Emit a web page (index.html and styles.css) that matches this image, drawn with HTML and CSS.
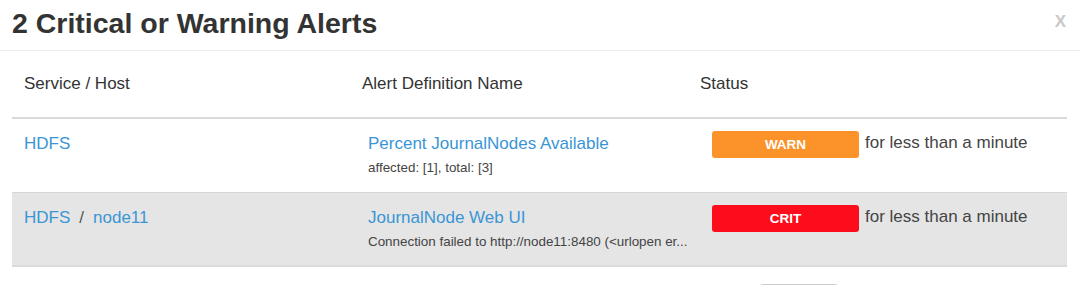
FILE: index.html
```html
<!DOCTYPE html>
<html lang="en">
<head>
  <meta charset="UTF-8">
  <title>Critical or Warning Alerts</title>
  <link rel="stylesheet" href="styles.css">
</head>
<body>

<div class="modal">
  <div class="modal-header">
    <h3>2 Critical or Warning Alerts</h3>
    <span class="close">X</span>
  </div>

  <div class="alerts">
    <div class="alert-row head">
      <div class="cell">Service / Host</div>
      <div class="cell">Alert Definition Name</div>
      <div class="cell">Status</div>
    </div>

    <div class="alert-row">
      <div class="cell host"><a href="#">HDFS</a></div>
      <div class="cell name">
        <a href="#">Percent JournalNodes Available</a>
        <div class="detail">affected: [1], total: [3]</div>
      </div>
      <div class="cell status">
        <span class="badge warn">WARN</span>
        <span class="since">for less than a minute</span>
      </div>
    </div>

    <div class="alert-row shaded">
      <div class="cell host"><a href="#">HDFS</a><span class="sep">/</span><a href="#">node11</a></div>
      <div class="cell name">
        <a href="#">JournalNode Web UI</a>
        <div class="detail">Connection failed to http://node11:8480 (&lt;urlopen er...</div>
      </div>
      <div class="cell status">
        <span class="badge crit">CRIT</span>
        <span class="since">for less than a minute</span>
      </div>
    </div>
  </div>

  <!-- footer button is cut off by the window -->
  <div class="modal-footer">
    <button class="btn" aria-label="OK"></button>
  </div>
</div>

</body>
</html>
```

FILE: styles.css
```css
body {
  margin: 0;
  font-family: 'Liberation Sans', Arial, sans-serif;
  font-size: 17px;
  color: #333;
  background: #fff;
  overflow: hidden;
}

a {
  color: #3a95d5;
  text-decoration: none;
}

.modal-header {
  display: flex;
  align-items: flex-start;
  justify-content: space-between;
  height: 50px;
  padding: 0 14px 0 12px;
  border-bottom: 1px solid #ececec;
}

.modal-header h3 {
  margin: 0;
  padding-top: 7px;
  font-size: 28.5px;
  font-weight: bold;
  color: #333;
}

.close {
  margin-top: 12px;
  font-size: 17px;
  font-weight: bold;
  color: #c8c8c8;
}

.alerts {
  margin: 0 13px 0 12px;
}

.alert-row {
  display: grid;
  grid-template-columns: 338px 338px 1fr;
  height: 73px;
  border-bottom: 1px solid #d6d6d6;
}

.alert-row.head {
  height: 66px;
  border-bottom: 2px solid #d9d9d9;
  align-items: center;
  color: #333;
}

.alert-row.shaded {
  background: #e5e5e5;
  height: 72px;
  border-bottom: 2px solid #dadada;
}

.cell {
  padding-left: 12px;
}

.alert-row .host {
  padding-top: 15px;
}

.alert-row .name {
  padding: 15px 0 0 18px;
}

.alert-row .status {
  padding: 12px 0 0 24px;
  display: flex;
  align-items: flex-start;
  gap: 6px;
  color: #444;
}

.alert-row.head .cell {
  padding: 0 0 0 12px;
}

.sep {
  color: #555;
  margin: 0 9px;
}

.detail {
  margin-top: 6px;
  font-size: 13.4px;
  color: #444;
}

.badge {
  display: inline-block;
  width: 147px;
  height: 27px;
  line-height: 28px;
  text-align: center;
  border-radius: 3px;
  color: #fff;
  font-size: 13.5px;
  font-weight: bold;
}

.warn {
  background: #fc922a;
}

.crit {
  background: #fd0d1c;
}

.since {
  padding-top: 2px;
}

.modal-footer {
  display: flex;
  justify-content: flex-end;
  padding: 17px 241px 0 0;
}

.btn {
  width: 80px;
  height: 34px;
  border: 1px solid #ccc;
  border-radius: 4px;
  background: #fff;
}
```
